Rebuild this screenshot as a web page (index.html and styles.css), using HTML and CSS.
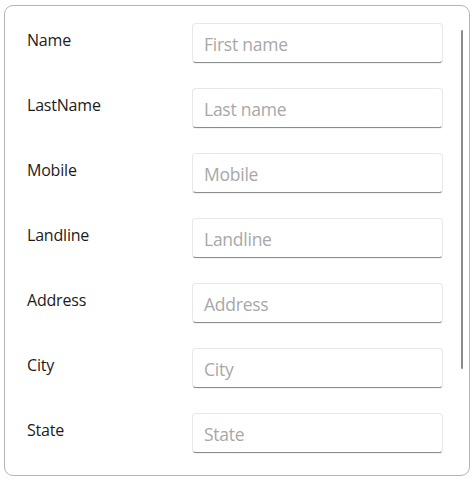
FILE: index.html
```html
<!DOCTYPE html>
<html lang="en">
<head>
<meta charset="utf-8">
<title>Form</title>
<link rel="stylesheet" href="styles.css">
</head>
<body>
<div class="panel">
  <div class="form">
    <div class="label">Name</div>
    <div class="field"><span class="placeholder">First name</span></div>
    <div class="label">LastName</div>
    <div class="field"><span class="placeholder">Last name</span></div>
    <div class="label">Mobile</div>
    <div class="field"><span class="placeholder">Mobile</span></div>
    <div class="label">Landline</div>
    <div class="field"><span class="placeholder">Landline</span></div>
    <div class="label">Address</div>
    <div class="field"><span class="placeholder">Address</span></div>
    <div class="label">City</div>
    <div class="field"><span class="placeholder">City</span></div>
    <div class="label">State</div>
    <div class="field"><span class="placeholder">State</span></div>
  </div>
  <div class="scrollbar"></div>
</div>
</body>
</html>
```
FILE: styles.css
```css
html, body {
  margin: 0;
  padding: 0;
  background: #ffffff;
}

body {
  font-family: "Open Sans", "Noto Sans", "Liberation Sans", sans-serif;
}

.panel {
  box-sizing: border-box;
  margin: 5px 0 0 4px;
  width: 466px;
  height: 471px;
  border: 1px solid #b4b4b4;
  border-radius: 9px;
  padding: 17px 0 0 22px;
  display: flex;
  align-items: flex-start;
}

.form {
  display: grid;
  grid-template-columns: 165px 251px;
  grid-auto-rows: 40px;
  row-gap: 25px;
}

.label {
  padding-top: 6px;
  font-size: 16px;
  line-height: 22px;
  letter-spacing: -0.2px;
  color: #1b1b1b;
}

.field {
  box-sizing: border-box;
  height: 40px;
  border: 1px solid #e8e8e8;
  border-bottom: 1px solid #8c8c8c;
  border-radius: 4px;
  padding: 2px 11px 0;
  background: #ffffff;
  box-shadow: 0 1px 0 rgba(0, 0, 0, 0.05);
}

.placeholder {
  display: block;
  font-size: 17.5px;
  line-height: 36px;
  letter-spacing: -0.25px;
  color: #a8a8a8;
}

.scrollbar {
  flex: none;
  width: 2px;
  height: 339px;
  margin: 7px 0 0 18px;
  border-radius: 1px;
  background: #8a8a8a;
}
```
